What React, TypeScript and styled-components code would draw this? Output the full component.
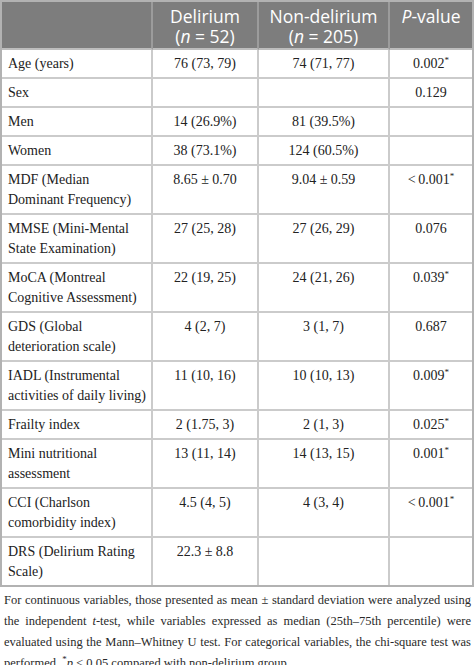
import React from "react";
import styled, { createGlobalStyle } from "styled-components";

const GlobalStyle = createGlobalStyle`
  html, body { margin: 0; padding: 0; background: #ffffff; }
  * { box-sizing: border-box; }
`;

const Page = styled.div`
  width: 474px;
`;

const Table = styled.div`
  display: grid;
  grid-template-columns: 151px 106px 131px 1fr;
  width: 474px;
  border: 2px solid #b2b2b2;
`;

const HeadCell = styled.div<{ $last?: boolean }>`
  background: #7d7d7d;
  color: #ffffff;
  font-family: "Open Sans", "DejaVu Sans", sans-serif;
  font-size: 17.5px;
  line-height: 20px;
  padding: 4px 4px 2px;
  text-align: center;
  border-right: ${(p) => (p.$last ? "none" : "2px solid #9c9c9c")};
  border-bottom: 2px solid #bdbdbd;
`;

const Cell = styled.div<{ $label?: boolean; $last?: boolean; $lastRow?: boolean }>`
  font-family: "Liberation Serif", "Times New Roman", serif;
  font-size: 14px;
  line-height: 20px;
  color: #222222;
  padding: ${(p) => (p.$label ? "4px 4px 3px 6px" : "4px 4px 3px")};
  text-align: ${(p) => (p.$label ? "left" : "center")};
  border-right: ${(p) => (p.$last ? "none" : "2px solid #cbcbcb")};
  border-bottom: ${(p) => (p.$lastRow ? "none" : "2px solid #cbcbcb")};
`;

const Sup = styled.sup`
  font-size: 9px;
  line-height: 0;
  vertical-align: 5px;
`;

const I = styled.i`
  font-style: italic;
`;

const Footer = styled.div`
  margin-top: 3px;
  padding: 0 3px 0 4px;
  font-family: "Liberation Serif", "Times New Roman", serif;
  font-size: 12.5px;
  line-height: 21px;
  color: #2a2a2a;
`;

const FooterLine = styled.span<{ $end?: boolean }>`
  display: block;
  text-align: justify;
  text-align-last: ${(p) => (p.$end ? "left" : "justify")};
  white-space: nowrap;
`;

type Row = {
  label: string;
  del: string;
  non: string;
  p: string;
  star?: boolean;
};

const PM = "\u00b1";

const rows: Row[] = [
  { label: "Age (years)", del: "76 (73, 79)", non: "74 (71, 77)", p: "0.002", star: true },
  { label: "Sex", del: "", non: "", p: "0.129" },
  { label: "Men", del: "14 (26.9%)", non: "81 (39.5%)", p: "" },
  { label: "Women", del: "38 (73.1%)", non: "124 (60.5%)", p: "" },
  { label: "MDF (Median Dominant Frequency)", del: `8.65 ${PM} 0.70`, non: `9.04 ${PM} 0.59`, p: "<\u20090.001", star: true },
  { label: "MMSE (Mini-Mental State Examination)", del: "27 (25, 28)", non: "27 (26, 29)", p: "0.076" },
  { label: "MoCA (Montreal Cognitive Assessment)", del: "22 (19, 25)", non: "24 (21, 26)", p: "0.039", star: true },
  { label: "GDS (Global deterioration scale)", del: "4 (2, 7)", non: "3 (1, 7)", p: "0.687" },
  { label: "IADL (Instrumental activities of daily living)", del: "11 (10, 16)", non: "10 (10, 13)", p: "0.009", star: true },
  { label: "Frailty index", del: "2 (1.75, 3)", non: "2 (1, 3)", p: "0.025", star: true },
  { label: "Mini nutritional assessment", del: "13 (11, 14)", non: "14 (13, 15)", p: "0.001", star: true },
  { label: "CCI (Charlson comorbidity index)", del: "4.5 (4, 5)", non: "4 (3, 4)", p: "<\u20090.001", star: true },
  { label: "DRS (Delirium Rating Scale)", del: `22.3 ${PM} 8.8`, non: "", p: "" },
];

export default function App() {
  return (
    <Page>
      <GlobalStyle />
      <Table>
        <HeadCell />
        <HeadCell>
          Delirium
          <br />(<I>n</I> = 52)
        </HeadCell>
        <HeadCell>
          Non-delirium
          <br />(<I>n</I> = 205)
        </HeadCell>
        <HeadCell $last>
          <I>P</I>-value
        </HeadCell>
        {rows.map((r, i) => {
          const lastRow = i === rows.length - 1;
          return (
            <React.Fragment key={r.label}>
              <Cell $label $lastRow={lastRow}>{r.label}</Cell>
              <Cell $lastRow={lastRow}>{r.del}</Cell>
              <Cell $lastRow={lastRow}>{r.non}</Cell>
              <Cell $last $lastRow={lastRow}>
                {r.p}
                {r.star && <Sup>*</Sup>}
              </Cell>
            </React.Fragment>
          );
        })}
      </Table>
      <Footer>
        <FooterLine>
          {`For continuous variables, those presented as mean ${PM} standard deviation were analyzed using`}
        </FooterLine>
        <FooterLine>
          the independent <I>t</I>-test, while variables expressed as median (25th–75th percentile) were
        </FooterLine>
        <FooterLine>
          evaluated using the Mann–Whitney U test. For categorical variables, the chi-square test was
        </FooterLine>
        <FooterLine $end>
          performed. <Sup>*</Sup>
          <I>p</I> &lt; 0.05 compared with non-delirium group.
        </FooterLine>
      </Footer>
    </Page>
  );
}
